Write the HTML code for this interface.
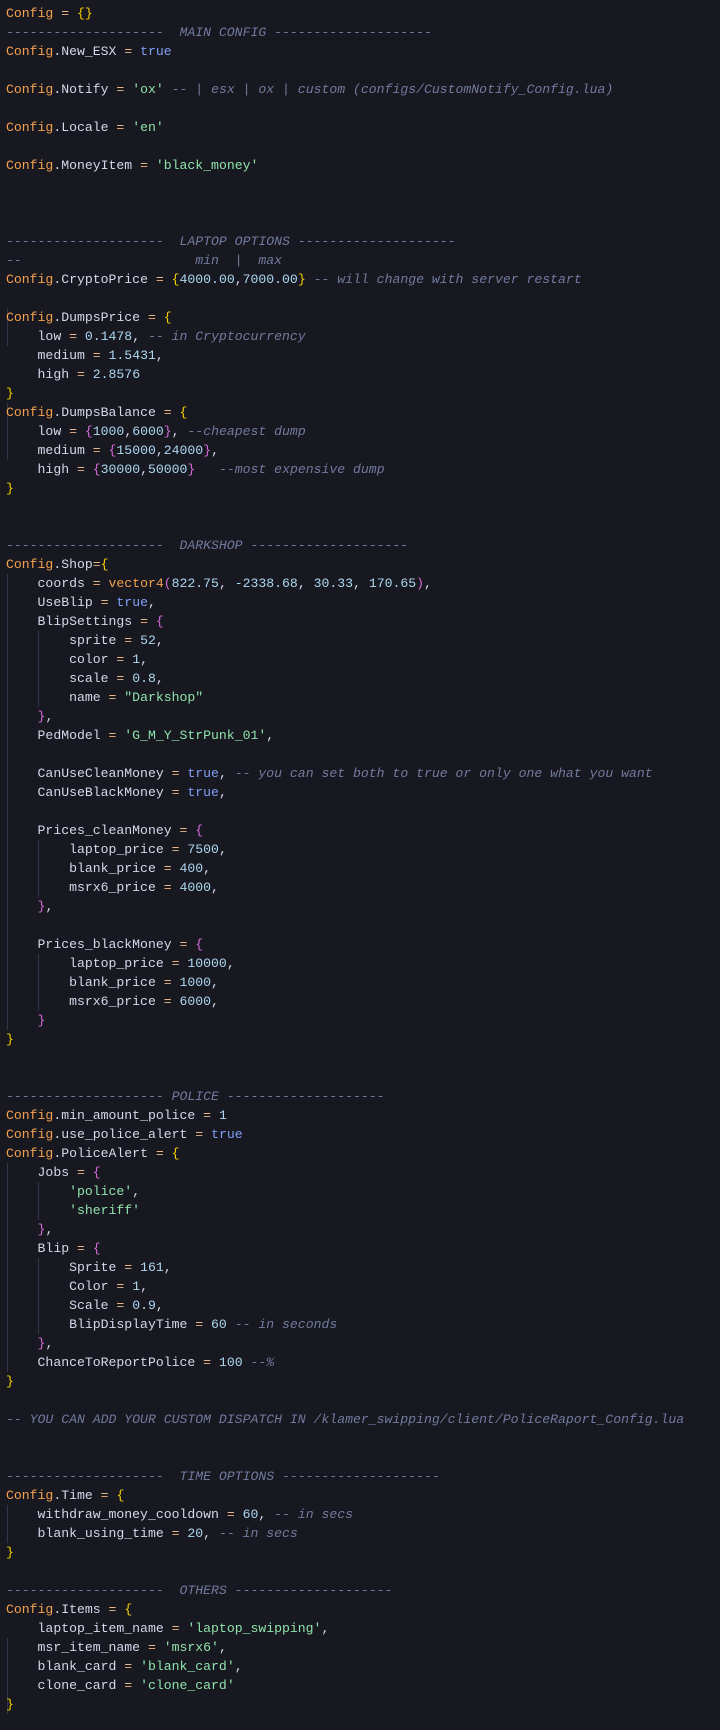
<!DOCTYPE html>
<html><head><meta charset="utf-8"><style>
html,body{margin:0;padding:0;background:#181821;}
body{width:720px;height:1730px;overflow:hidden;position:relative;}
pre{margin:0;position:absolute;left:6px;top:4px;font-family:"Liberation Mono",monospace;font-size:13.15px;line-height:19px;color:#d4d8ea;}
.k{color:#f5a04e}.b{color:#7f9ff5}.s{color:#8fe3aa}.n{color:#add8f2}.c{color:#727a9e;font-style:italic}.y{color:#f5d000}.m{color:#d56ad8}.o{color:#e8b58a}
.g{position:absolute;width:1px;background:#33364a;}
</style></head><body>
<div class="g" style="left:7px;top:308px;height:38px"></div>
<div class="g" style="left:7px;top:403px;height:57px"></div>
<div class="g" style="left:7px;top:574px;height:456px"></div>
<div class="g" style="left:38px;top:631px;height:76px"></div>
<div class="g" style="left:38px;top:840px;height:57px"></div>
<div class="g" style="left:38px;top:954px;height:57px"></div>
<div class="g" style="left:7px;top:1163px;height:209px"></div>
<div class="g" style="left:38px;top:1182px;height:38px"></div>
<div class="g" style="left:38px;top:1258px;height:76px"></div>
<div class="g" style="left:7px;top:1505px;height:38px"></div>
<div class="g" style="left:7px;top:1638px;height:76px"></div>
<pre><span class="k">Config</span> <span class="o">=</span> <span class="y">{}</span>
<span class="c">--------------------  MAIN CONFIG --------------------</span>
<span class="k">Config</span>.New_ESX <span class="o">=</span> <span class="b">true</span>

<span class="k">Config</span>.Notify <span class="o">=</span> <span class="s">'ox'</span> <span class="c">-- | esx | ox | custom (configs/CustomNotify_Config.lua)</span>

<span class="k">Config</span>.Locale <span class="o">=</span> <span class="s">'en'</span>

<span class="k">Config</span>.MoneyItem <span class="o">=</span> <span class="s">'black_money'</span>



<span class="c">--------------------  LAPTOP OPTIONS --------------------</span>
<span class="c">--                      min  |  max</span>
<span class="k">Config</span>.CryptoPrice <span class="o">=</span> <span class="y">{</span><span class="n">4000.00</span>,<span class="n">7000.00</span><span class="y">}</span> <span class="c">-- will change with server restart</span>

<span class="k">Config</span>.DumpsPrice <span class="o">=</span> <span class="y">{</span>
    low <span class="o">=</span> <span class="n">0.1478</span>, <span class="c">-- in Cryptocurrency</span>
    medium <span class="o">=</span> <span class="n">1.5431</span>,
    high <span class="o">=</span> <span class="n">2.8576</span>
<span class="y">}</span>
<span class="k">Config</span>.DumpsBalance <span class="o">=</span> <span class="y">{</span>
    low <span class="o">=</span> <span class="m">{</span><span class="n">1000</span>,<span class="n">6000</span><span class="m">}</span>, <span class="c">--cheapest dump</span>
    medium <span class="o">=</span> <span class="m">{</span><span class="n">15000</span>,<span class="n">24000</span><span class="m">}</span>,
    high <span class="o">=</span> <span class="m">{</span><span class="n">30000</span>,<span class="n">50000</span><span class="m">}</span>   <span class="c">--most expensive dump</span>
<span class="y">}</span>


<span class="c">--------------------  DARKSHOP --------------------</span>
<span class="k">Config</span>.Shop<span class="o">=</span><span class="y">{</span>
    coords <span class="o">=</span> <span class="k">vector4</span><span class="m">(</span><span class="n">822.75</span>, <span class="n">-2338.68</span>, <span class="n">30.33</span>, <span class="n">170.65</span><span class="m">)</span>,
    UseBlip <span class="o">=</span> <span class="b">true</span>,
    BlipSettings <span class="o">=</span> <span class="m">{</span>
        sprite <span class="o">=</span> <span class="n">52</span>,
        color <span class="o">=</span> <span class="n">1</span>,
        scale <span class="o">=</span> <span class="n">0.8</span>,
        name <span class="o">=</span> <span class="s">"Darkshop"</span>
    <span class="m">}</span>,
    PedModel <span class="o">=</span> <span class="s">'G_M_Y_StrPunk_01'</span>,

    CanUseCleanMoney <span class="o">=</span> <span class="b">true</span>, <span class="c">-- you can set both to true or only one what you want</span>
    CanUseBlackMoney <span class="o">=</span> <span class="b">true</span>,

    Prices_cleanMoney <span class="o">=</span> <span class="m">{</span>
        laptop_price <span class="o">=</span> <span class="n">7500</span>,
        blank_price <span class="o">=</span> <span class="n">400</span>,
        msrx6_price <span class="o">=</span> <span class="n">4000</span>,
    <span class="m">}</span>,

    Prices_blackMoney <span class="o">=</span> <span class="m">{</span>
        laptop_price <span class="o">=</span> <span class="n">10000</span>,
        blank_price <span class="o">=</span> <span class="n">1000</span>,
        msrx6_price <span class="o">=</span> <span class="n">6000</span>,
    <span class="m">}</span>
<span class="y">}</span>


<span class="c">-------------------- POLICE --------------------</span>
<span class="k">Config</span>.min_amount_police <span class="o">=</span> <span class="n">1</span>
<span class="k">Config</span>.use_police_alert <span class="o">=</span> <span class="b">true</span>
<span class="k">Config</span>.PoliceAlert <span class="o">=</span> <span class="y">{</span>
    Jobs <span class="o">=</span> <span class="m">{</span>
        <span class="s">'police'</span>,
        <span class="s">'sheriff'</span>
    <span class="m">}</span>,
    Blip <span class="o">=</span> <span class="m">{</span>
        Sprite <span class="o">=</span> <span class="n">161</span>,
        Color <span class="o">=</span> <span class="n">1</span>,
        Scale <span class="o">=</span> <span class="n">0.9</span>,
        BlipDisplayTime <span class="o">=</span> <span class="n">60</span> <span class="c">-- in seconds</span>
    <span class="m">}</span>,
    ChanceToReportPolice <span class="o">=</span> <span class="n">100</span> <span class="c">--%</span>
<span class="y">}</span>

<span class="c">-- YOU CAN ADD YOUR CUSTOM DISPATCH IN /klamer_swipping/client/PoliceRaport_Config.lua</span>


<span class="c">--------------------  TIME OPTIONS --------------------</span>
<span class="k">Config</span>.Time <span class="o">=</span> <span class="y">{</span>
    withdraw_money_cooldown <span class="o">=</span> <span class="n">60</span>, <span class="c">-- in secs</span>
    blank_using_time <span class="o">=</span> <span class="n">20</span>, <span class="c">-- in secs</span>
<span class="y">}</span>

<span class="c">--------------------  OTHERS --------------------</span>
<span class="k">Config</span>.Items <span class="o">=</span> <span class="y">{</span>
    laptop_item_name <span class="o">=</span> <span class="s">'laptop_swipping'</span>,
    msr_item_name <span class="o">=</span> <span class="s">'msrx6'</span>,
    blank_card <span class="o">=</span> <span class="s">'blank_card'</span>,
    clone_card <span class="o">=</span> <span class="s">'clone_card'</span>
<span class="y">}</span></pre>
</body></html>
